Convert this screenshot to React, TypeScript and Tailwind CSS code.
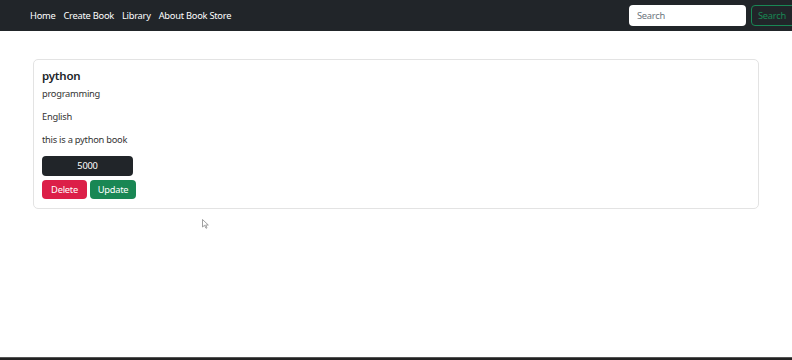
export default function App() {
  return (
    <div className="relative h-[360px] w-[792px] overflow-hidden bg-white font-['Noto_Sans',sans-serif] text-[#212529]">
      <nav className="flex h-[31px] items-center bg-[#212529] pl-[30px]">
        <div className="flex items-center gap-[8px] text-[9.3px] tracking-[-0.25px] text-white">
          <span>Home</span>
          <span>Create Book</span>
          <span>Library</span>
          <span>About Book Store</span>
        </div>
        <div className="ml-auto mr-[-10px] flex shrink-0 items-center gap-[5px]">
          <div className="flex h-[21px] w-[117px] items-center rounded-[4px] bg-white px-[8px] text-[9.3px] tracking-[-0.25px] text-[#6c757d]">Search</div>
          <div className="flex h-[21px] w-[51px] items-center rounded-[4px] border border-[#198754] px-[6px] text-[9.3px] tracking-[-0.25px] text-[#198754]">Search</div>
        </div>
      </nav>
      <div className="px-[33px] pt-[28px]">
        <div className="w-[726px] rounded-[5px] border border-[#e3e3e3] px-[8px] pb-[9px] pt-[8px]">
          <div className="text-[11.5px] font-semibold leading-[16px] tracking-[-0.2px]">python</div>
          <p className="mt-[3px] text-[9.3px] leading-[14px] tracking-[-0.25px] text-[#333]">programming</p>
          <p className="mt-[9px] text-[9.3px] leading-[14px] tracking-[-0.25px] text-[#333]">English</p>
          <p className="mt-[9px] text-[9.3px] leading-[14px] tracking-[-0.25px] text-[#333]">this is a python book</p>
          <div className="mt-[9px] flex h-[20px] w-[91px] items-center justify-center rounded-[4px] bg-[#212529] text-[9.3px] tracking-[-0.25px] text-white">5000</div>
          <div className="mt-[4px] flex gap-[3px]">
            <div className="flex h-[19px] w-[45px] items-center justify-center rounded-[4px] bg-[#dc1f48] text-[9.3px] tracking-[-0.25px] text-white">Delete</div>
            <div className="flex h-[19px] w-[46px] items-center justify-center rounded-[4px] bg-[#198754] text-[9.3px] tracking-[-0.25px] text-white">Update</div>
          </div>
        </div>
      </div>
      <svg className="absolute left-[202px] top-[219px]" width="7" height="10" viewBox="0 0 7 10">
        <path d="M0.5 0.5 L0.5 8 L2.5 6.3 L4 9.3 L5 8.8 L3.7 6 L6.3 6 Z" fill="#fff" stroke="#888" strokeWidth="0.8" />
      </svg>
      <div className="absolute bottom-0 left-0 h-[3px] w-full bg-[#222] border-t border-[#555]" />
    </div>
  );
}
